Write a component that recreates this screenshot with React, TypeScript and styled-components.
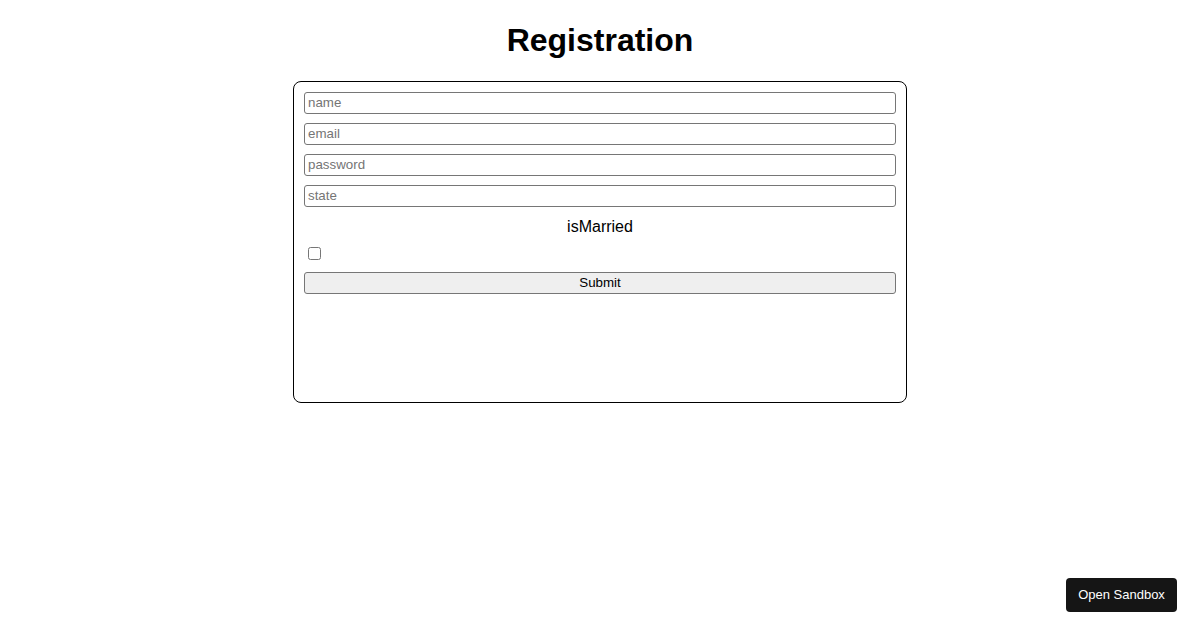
import React from 'react'
import styled, { createGlobalStyle } from 'styled-components'

const GlobalStyle = createGlobalStyle`
  html, body {
    margin: 0;
    padding: 0;
    background: #fff;
    font-family: "Liberation Sans", Arial, sans-serif;
    color: #000;
  }
`

const Page = styled.div`
  display: flex;
  flex-direction: column;
  align-items: center;
`

const Title = styled.h1`
  margin: 22px 0 22px;
  font-size: 32px;
  line-height: 37px;
  font-weight: 700;
`

const Card = styled.form`
  box-sizing: border-box;
  width: 614px;
  min-height: 322px;
  padding: 10px;
  border: 1px solid #000;
  border-radius: 8px;
  display: flex;
  flex-direction: column;
  gap: 9px;
`

const Field = styled.input`
  box-sizing: border-box;
  width: 100%;
  height: 22px;
  margin: 0;
  padding: 0 3px 1px;
  border: 1px solid #767676;
  border-radius: 3px;
  font: 13.33px "Liberation Sans", Arial, sans-serif;
  color: #000;

  &::placeholder {
    color: #757575;
  }
`

const Label = styled.label`
  display: block;
  text-align: center;
  font-size: 16px;
  line-height: 19px;
  padding-top: 1px;
  margin-bottom: -1px;
`

const CheckRow = styled.div`
  display: flex;
  height: 19px;
  align-items: center;
`

const Check = styled.input`
  width: 13px;
  height: 13px;
  margin: 3px 3px 3px 4px;
`

const SubmitButton = styled.button`
  box-sizing: border-box;
  width: 100%;
  height: 22px;
  margin: 0;
  padding: 0 0 1px;
  background: #efefef;
  border: 1px solid #767676;
  border-radius: 3px;
  font: 13.33px "Liberation Sans", Arial, sans-serif;
  color: #000;
`

const SandboxButton = styled.button`
  position: fixed;
  right: 23px;
  bottom: 18px;
  width: 111px;
  height: 34px;
  padding: 0 0 1px;
  border: none;
  border-radius: 4px;
  background: #151515;
  color: #fff;
  font: 13px "Liberation Sans", Arial, sans-serif;
`

const fields = ['name', 'email', 'password', 'state']

export default function App() {
  return (
    <Page>
      <GlobalStyle />
      <Title>Registration</Title>
      <Card onSubmit={e => e.preventDefault()}>
        {fields.map(f => (
          <Field key={f} placeholder={f} type={f === 'password' ? 'password' : 'text'} />
        ))}
        <Label htmlFor="isMarried">isMarried</Label>
        <CheckRow>
          <Check id="isMarried" type="checkbox" />
        </CheckRow>
        <SubmitButton type="submit">Submit</SubmitButton>
      </Card>
      <SandboxButton>Open Sandbox</SandboxButton>
    </Page>
  )
}
